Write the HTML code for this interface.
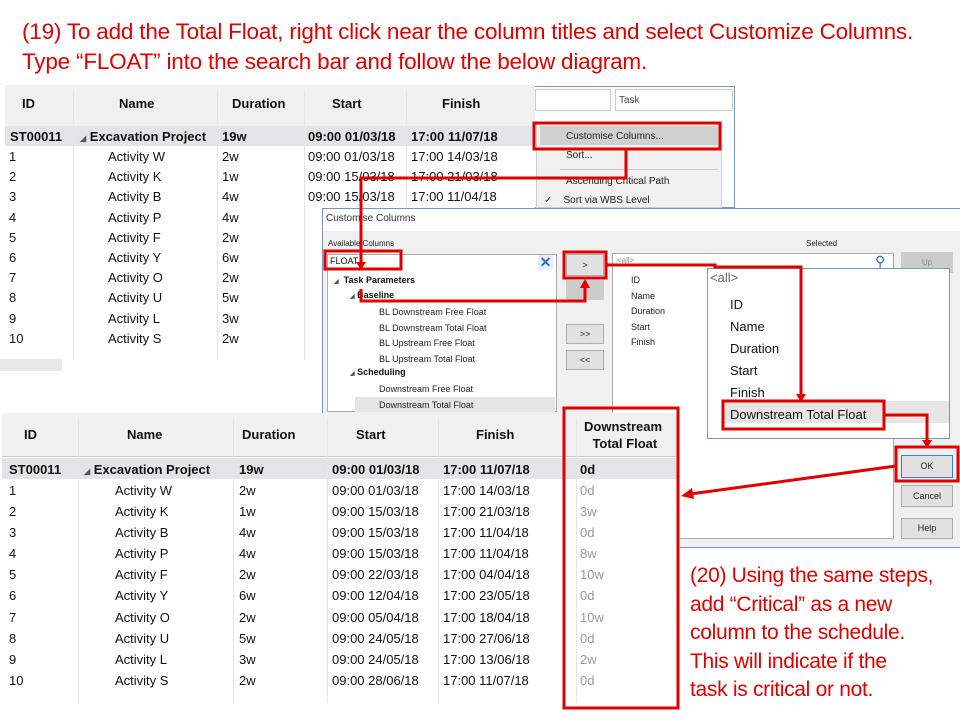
<!DOCTYPE html>
<html><head><meta charset="utf-8"><style>
*{margin:0;padding:0;box-sizing:border-box}
body{width:960px;height:720px;background:#fff;position:relative;overflow:hidden;font-family:"Liberation Sans",Arial,sans-serif}
.a{position:absolute;white-space:nowrap}
.t{font-size:13px;color:#111}
.h{font-size:13px;font-weight:bold;color:#111}
.red{color:#e00000;font-family:"Liberation Sans",sans-serif}
.s{font-size:10px;color:#222}
.btn{position:absolute;background:#e1e1e1;border:1px solid #adadad;font-size:9px;text-align:center;color:#222}
</style></head><body>
<div class="a red" style="left:22px;top:17px;font-size:22.5px;line-height:29.5px;letter-spacing:-0.2px">(19) To add the Total Float, right click near the column titles and select Customize Columns.<br>Type “FLOAT” into the search bar and follow the below diagram.</div>

<!-- top table -->
<div class="a" style="left:5px;top:85px;width:530px;height:285px;background:#fff"></div>
<div class="a" style="left:5px;top:85px;width:530px;height:42px;background:#f0f0f0;border-bottom:1px solid #ccc"></div>
<div class="a" style="left:5px;top:126px;width:530px;height:20px;background:#e4e4e6"></div>
<div class="a h" style="left:22px;top:96px">ID</div>
<div class="a h" style="left:119px;top:96px">Name</div>
<div class="a h" style="left:232px;top:96px">Duration</div>
<div class="a h" style="left:332px;top:96px">Start</div>
<div class="a h" style="left:442px;top:96px">Finish</div>
<div class="a" style="left:73px;top:90px;width:1px;height:270px;background:#e6e6e6"></div>
<div class="a" style="left:217px;top:90px;width:1px;height:270px;background:#e6e6e6"></div>
<div class="a" style="left:304px;top:90px;width:1px;height:270px;background:#e6e6e6"></div>
<div class="a" style="left:406px;top:90px;width:1px;height:270px;background:#e6e6e6"></div>
<div class="a h" style="left:10px;top:129px">ST00011</div>
<div class="a h" style="left:80px;top:129px"><span style="font-size:8px;color:#555">◢</span> Excavation Project</div>
<div class="a h" style="left:222px;top:129px">19w</div>
<div class="a h" style="left:308px;top:129px">09:00 01/03/18</div>
<div class="a h" style="left:411px;top:129px">17:00 11/07/18</div>
<div class="a t" style="left:9px;top:147px;line-height:20.2px">1<br>2<br>3<br>4<br>5<br>6<br>7<br>8<br>9<br>10</div>
<div class="a t" style="left:108px;top:147px;line-height:20.2px">Activity W<br>Activity K<br>Activity B<br>Activity P<br>Activity F<br>Activity Y<br>Activity O<br>Activity U<br>Activity L<br>Activity S</div>
<div class="a t" style="left:222px;top:147px;line-height:20.2px">2w<br>1w<br>4w<br>4w<br>2w<br>6w<br>2w<br>5w<br>3w<br>2w</div>
<div class="a t" style="left:308px;top:147px;line-height:20.2px">09:00 01/03/18<br>09:00 15/03/18<br>09:00 15/03/18</div>
<div class="a t" style="left:411px;top:147px;line-height:20.2px">17:00 14/03/18<br>17:00 21/03/18<br>17:00 11/04/18</div>
<div class="a" style="left:0;top:359px;width:62px;height:12px;background:#e8e8e8"></div>

<!-- context menu area -->
<div class="a" style="left:535px;top:86px;width:200px;height:122px;border:1px solid #7a95c0;border-left:none;background:#fff"></div>
<div class="a" style="left:535px;top:89px;width:76px;height:22px;border:1px solid #ccc;background:#fff"></div>
<div class="a" style="left:615px;top:89px;width:118px;height:22px;border:1px solid #ccc;background:#fff;font-size:10px;color:#444;padding:5px 3px">Task</div>
<div class="a" style="left:536px;top:122px;width:186px;height:86px;background:#f0f0f0;border:1px solid #ccc"></div>
<div class="a" style="left:540px;top:126px;width:178px;height:19px;background:#d0d0d0"></div>
<div class="a s" style="left:566px;top:131px">Customise Columns...</div>
<div class="a s" style="left:566px;top:150px">Sort...</div>
<div class="a" style="left:560px;top:169px;width:158px;height:1px;background:#ccc"></div>
<div class="a s" style="left:566px;top:176px">Ascending Critical Path</div>
<div class="a s" style="left:544px;top:195px">✓&nbsp;&nbsp;&nbsp;&nbsp;Sort via WBS Level</div>

<!-- dialog -->
<div class="a" style="left:322px;top:208px;width:640px;height:340px;background:#f0f0f0;border:1px solid #7a95c0"></div>
<div class="a" style="left:323px;top:209px;width:637px;height:22px;background:#fff"></div>
<div class="a" style="left:326px;top:213px;font-size:10px;color:#333">Customise Columns</div>
<div class="a" style="left:328px;top:239px;font-size:8px;color:#222">Available Columns</div>
<div class="a" style="left:806px;top:239px;font-size:8px;color:#222">Selected</div>
<div class="a" style="left:327px;top:254px;width:230px;height:158px;background:#fff;border:1px solid #aaa"></div>
<div class="a" style="left:330px;top:256px;font-size:9px;color:#111">FLOAT</div>
<div class="a" style="left:538px;top:255px;width:15px;height:15px;color:#2a6fb8;font-size:14px;font-weight:bold;line-height:15px;text-align:center;background:#e8eef5">✕</div>
<div class="a" style="left:334px;top:275px;font-size:9px;font-weight:bold;color:#111"><span style="font-size:6px;color:#555">◢</span>&nbsp;&nbsp;Task Parameters</div>
<div class="a" style="left:350px;top:290px;font-size:9px;font-weight:bold;color:#111"><span style="font-size:6px;color:#555">◢</span>&nbsp;Baseline</div>
<div class="a" style="left:379px;top:305px;font-size:9px;color:#222;line-height:15.5px">BL Downstream Free Float<br>BL Downstream Total Float<br>BL Upstream Free Float<br>BL Upstream Total Float</div>
<div class="a" style="left:350px;top:367px;font-size:9px;font-weight:bold;color:#111"><span style="font-size:6px;color:#555">◢</span>&nbsp;Scheduling</div>
<div class="a" style="left:355px;top:397px;width:200px;height:15px;background:#e6e6e6"></div>
<div class="a" style="left:379px;top:382px;font-size:9px;color:#222;line-height:15.5px">Downstream Free Float<br>Downstream Total Float</div>
<div class="btn" style="left:566px;top:254px;width:38px;height:22px;line-height:20px">&gt;</div>
<div class="a" style="left:566px;top:280px;width:38px;height:20px;background:#ccc"></div>
<div class="btn" style="left:566px;top:324px;width:38px;height:20px;line-height:18px">&gt;&gt;</div>
<div class="btn" style="left:566px;top:350px;width:38px;height:20px;line-height:18px">&lt;&lt;</div>
<div class="a" style="left:612px;top:253px;width:282px;height:286px;background:#fff;border:1px solid #aaa"></div>
<div class="a" style="left:617px;top:256px;font-size:8px;color:#999">&lt;all&gt;</div>
<div class="a" style="left:875px;top:253px;color:#2a6fb8;font-size:14px">⚲</div>
<div class="a" style="left:631px;top:273px;font-size:9px;color:#222;line-height:15.5px">ID<br>Name<br>Duration<br>Start<br>Finish</div>
<div class="a" style="left:901px;top:252px;width:52px;height:21px;background:#ccc;font-size:8px;color:#888;text-align:center;line-height:21px">Up</div>

<!-- popup list -->
<div class="a" style="left:707px;top:268px;width:243px;height:171px;background:#fff;border:1px solid #7a95c0"></div>
<div class="a" style="left:710px;top:270px;font-size:13px;color:#666">&lt;all&gt;</div>
<div class="a" style="left:725px;top:401px;width:224px;height:22px;background:#e6e6e6"></div>
<div class="a" style="left:730px;top:294px;font-size:13px;color:#111;line-height:22px">ID<br>Name<br>Duration<br>Start<br>Finish<br>Downstream Total Float</div>

<div class="btn" style="left:901px;top:455px;width:52px;height:23px;line-height:21px;border-color:#3c7fd0">OK</div>
<div class="btn" style="left:901px;top:485px;width:52px;height:22px;line-height:20px">Cancel</div>
<div class="btn" style="left:901px;top:518px;width:52px;height:21px;line-height:19px">Help</div>

<!-- bottom table -->
<div class="a" style="left:0;top:413px;width:680px;height:297px;background:#fff"></div>
<div class="a" style="left:2px;top:413px;width:676px;height:44px;background:#f0f0f0;border-bottom:1px solid #ccc"></div>
<div class="a" style="left:2px;top:458px;width:676px;height:21px;background:#e4e4e6"></div>
<div class="a h" style="left:24px;top:427px">ID</div>
<div class="a h" style="left:127px;top:427px">Name</div>
<div class="a h" style="left:242px;top:427px">Duration</div>
<div class="a h" style="left:356px;top:427px">Start</div>
<div class="a h" style="left:476px;top:427px">Finish</div>
<div class="a h" style="left:584px;top:418px;text-align:center;line-height:17px">Downstream<br>&nbsp;Total Float</div>
<div class="a" style="left:78px;top:418px;width:1px;height:285px;background:#e6e6e6"></div>
<div class="a" style="left:233px;top:418px;width:1px;height:285px;background:#e6e6e6"></div>
<div class="a" style="left:327px;top:418px;width:1px;height:285px;background:#e6e6e6"></div>
<div class="a" style="left:438px;top:418px;width:1px;height:285px;background:#e6e6e6"></div>
<div class="a" style="left:576px;top:418px;width:1px;height:285px;background:#e6e6e6"></div>
<div class="a h" style="left:9px;top:462px">ST00011</div>
<div class="a h" style="left:84px;top:462px"><span style="font-size:8px;color:#555">◢</span> Excavation Project</div>
<div class="a h" style="left:239px;top:462px">19w</div>
<div class="a h" style="left:332px;top:462px">09:00 01/03/18</div>
<div class="a h" style="left:443px;top:462px">17:00 11/07/18</div>
<div class="a h" style="left:580px;top:462px">0d</div>
<div class="a t" style="left:9px;top:480px;line-height:21.1px">1<br>2<br>3<br>4<br>5<br>6<br>7<br>8<br>9<br>10</div>
<div class="a t" style="left:115px;top:480px;line-height:21.1px">Activity W<br>Activity K<br>Activity B<br>Activity P<br>Activity F<br>Activity Y<br>Activity O<br>Activity U<br>Activity L<br>Activity S</div>
<div class="a t" style="left:239px;top:480px;line-height:21.1px">2w<br>1w<br>4w<br>4w<br>2w<br>6w<br>2w<br>5w<br>3w<br>2w</div>
<div class="a t" style="left:332px;top:480px;line-height:21.1px">09:00 01/03/18<br>09:00 15/03/18<br>09:00 15/03/18<br>09:00 15/03/18<br>09:00 22/03/18<br>09:00 12/04/18<br>09:00 05/04/18<br>09:00 24/05/18<br>09:00 24/05/18<br>09:00 28/06/18</div>
<div class="a t" style="left:443px;top:480px;line-height:21.1px">17:00 14/03/18<br>17:00 21/03/18<br>17:00 11/04/18<br>17:00 11/04/18<br>17:00 04/04/18<br>17:00 23/05/18<br>17:00 18/04/18<br>17:00 27/06/18<br>17:00 13/06/18<br>17:00 11/07/18</div>
<div class="a t" style="left:580px;top:480px;line-height:21.1px;color:#999">0d<br>3w<br>0d<br>8w<br>10w<br>0d<br>10w<br>0d<br>2w<br>0d</div>

<div class="a" style="left:680px;top:548px;width:280px;height:172px;background:#fff"></div>
<div class="a red" style="left:690px;top:562px;font-size:21px;line-height:28.5px;letter-spacing:-0.3px">(20) Using the same steps,<br>add “Critical” as a new<br>column to the schedule.<br>This will indicate if the<br>task is critical or not.</div>

<svg class="a" style="left:0;top:0" width="960" height="720">
<g fill="none" stroke="#e00000" stroke-width="3">
<rect x="534" y="123" width="186" height="26"/>
<rect x="325" y="251" width="76" height="18"/>
<rect x="564" y="252" width="42" height="26"/>
<rect x="723" y="401" width="161" height="28"/>
<rect x="896" y="447" width="62" height="34"/>
<rect x="564" y="408" width="114" height="300"/>
<polyline points="626,149 626,178 361,178 361,265"/>
<polyline points="361,289 361,301 585,301 585,285"/>
<polyline points="606,265 715,265 715,267 801,267 801,395"/>
<polyline points="884,415 927,415 927,441"/>
<line x1="896" y1="466" x2="690" y2="494"/>
</g>
<g fill="#e00000">
<polygon points="356,262 366,262 361,270"/>
<polygon points="580,288 590,288 585,279"/>
<polygon points="796,394 806,394 801,402"/>
<polygon points="922,440 932,440 927,448"/>
<polygon points="681,496 692,488 694,499"/>
</g>
</svg>
</body></html>
